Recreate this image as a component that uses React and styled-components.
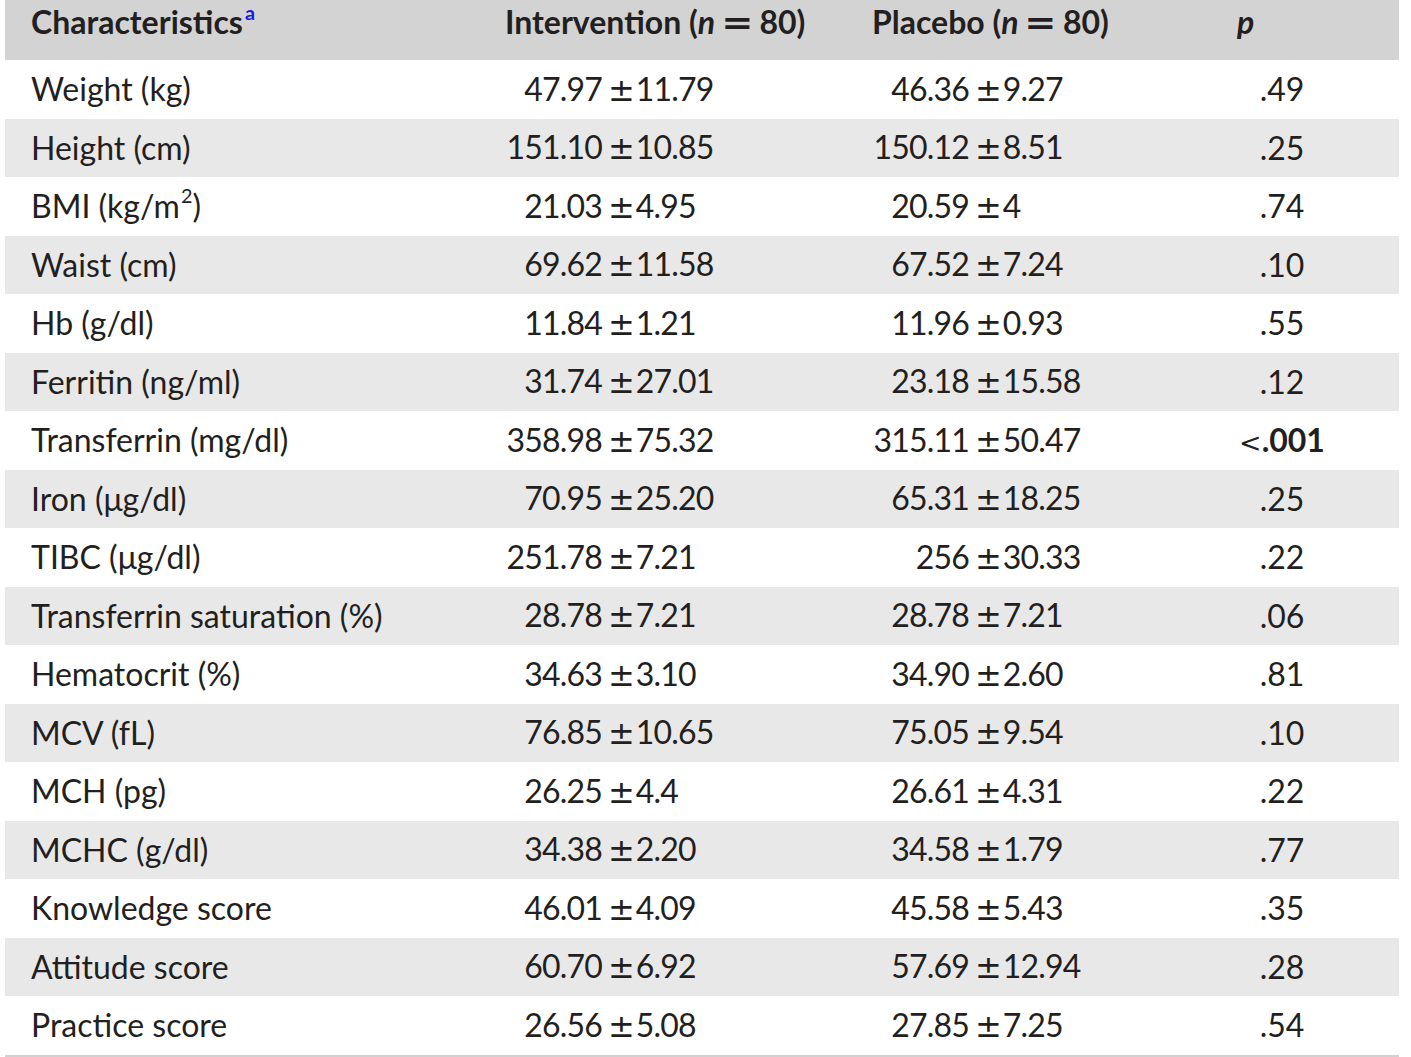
import styled, { createGlobalStyle } from "styled-components";

const GlobalStyle = createGlobalStyle`
  html, body {
    margin: 0;
    padding: 0;
    background: #ffffff;
  }
  body {
    font-family: Lato, "Open Sans", sans-serif;
    color: #231f20;
  }
`;

const SupText = styled.sup`
  font-size: 0.62em;
  line-height: 0;
  vertical-align: 0.75em;
  margin-left: 1px;
`;

const rows = [
  { label: "Weight (kg)", a: ["47.97", "11.79"], b: ["46.36", "9.27"], p: ".49" },
  { label: "Height (cm)", a: ["151.10", "10.85"], b: ["150.12", "8.51"], p: ".25" },
  { label: <>BMI (kg/m<SupText>2</SupText>)</>, a: ["21.03", "4.95"], b: ["20.59", "4"], p: ".74" },
  { label: "Waist (cm)", a: ["69.62", "11.58"], b: ["67.52", "7.24"], p: ".10" },
  { label: "Hb (g/dl)", a: ["11.84", "1.21"], b: ["11.96", "0.93"], p: ".55" },
  { label: "Ferritin (ng/ml)", a: ["31.74", "27.01"], b: ["23.18", "15.58"], p: ".12" },
  { label: "Transferrin (mg/dl)", a: ["358.98", "75.32"], b: ["315.11", "50.47"], p: "<.001", strong: true },
  { label: "Iron (μg/dl)", a: ["70.95", "25.20"], b: ["65.31", "18.25"], p: ".25" },
  { label: "TIBC (μg/dl)", a: ["251.78", "7.21"], b: ["256", "30.33"], p: ".22" },
  { label: "Transferrin saturation (%)", a: ["28.78", "7.21"], b: ["28.78", "7.21"], p: ".06" },
  { label: "Hematocrit (%)", a: ["34.63", "3.10"], b: ["34.90", "2.60"], p: ".81" },
  { label: "MCV (fL)", a: ["76.85", "10.65"], b: ["75.05", "9.54"], p: ".10" },
  { label: "MCH (pg)", a: ["26.25", "4.4"], b: ["26.61", "4.31"], p: ".22" },
  { label: "MCHC (g/dl)", a: ["34.38", "2.20"], b: ["34.58", "1.79"], p: ".77" },
  { label: "Knowledge score", a: ["46.01", "4.09"], b: ["45.58", "5.43"], p: ".35" },
  { label: "Attitude score", a: ["60.70", "6.92"], b: ["57.69", "12.94"], p: ".28" },
  { label: "Practice score", a: ["26.56", "5.08"], b: ["27.85", "7.25"], p: ".54" },
];

const Page = styled.div`
  padding: 0 12px 0 5px;
`;

const Table = styled.div`
  display: flex;
  flex-direction: column;
  border-bottom: 4px solid #d1d1d1;
  font-size: 32px;
`;

const Row = styled.div`
  display: grid;
  grid-template-columns: 475px 370px 365px 1fr;
  align-items: center;
  height: 58.5px;
  background: ${(p) => (p.$shade ? "#e8e8e8" : "#ffffff")};
`;

const HeadRow = styled(Row)`
  height: 60px;
  align-items: start;
  padding-top: 3px;
  box-sizing: border-box;
  background: #d3d3d3;
  font-weight: 700;
`;

const Cell = styled.div`
  padding-left: ${(p) => p.$pad || 22}px;
  white-space: nowrap;
  line-height: 1.2;
`;

const FootRef = styled.sup`
  font-size: 0.62em;
  font-weight: 700;
  line-height: 0;
  vertical-align: 0.7em;
  color: #1a1ae0;
  margin-left: 2px;
`;

/* math glyphs come from a wider font in the source */
const MathSym = styled.span`
  font-family: "DejaVu Sans", sans-serif;
  font-weight: ${(p) => (p.$bold ? 700 : 400)};
  letter-spacing: 0;
`;

const WideEq = styled(MathSym)`
  display: inline-block;
  margin: 0 1px;
  transform: scaleX(1.2);
`;

const Stat = styled.div`
  display: flex;
  align-items: baseline;
  padding-left: ${(p) => p.$pad}px;
  white-space: nowrap;
  line-height: 1.2;
  letter-spacing: -0.8px;
`;

const Mean = styled.span`
  width: ${(p) => p.$w}px;
  text-align: right;
`;

const PlusMinus = styled(MathSym)`
  margin-left: 6px;
  margin-right: 1px;
`;

const PValue = styled.div`
  width: 90px;
  margin-left: 22px;
  text-align: center;
  line-height: 1.2;
`;

const Less = styled(MathSym)`
  font-size: 0.84em;
`;

const Bold = styled.b`
  font-weight: 700;
`;

function Value({ pair, pad }) {
  return (
    <Stat $pad={pad}>
      <Mean $w={97}>{pair[0]}</Mean>
      <PlusMinus>±</PlusMinus>
      <span>{pair[1]}</span>
    </Stat>
  );
}

function GroupHead({ name }) {
  return (
    <>
      {name} (<i>n</i> <WideEq $bold>=</WideEq> 80)
    </>
  );
}

export default function App() {
  return (
    <Page>
      <GlobalStyle />
      <Table>
        <HeadRow>
          <Cell $pad={26}>
            Characteristics<FootRef>a</FootRef>
          </Cell>
          <Cell $pad={25}>
            <GroupHead name="Intervention" />
          </Cell>
          <Cell $pad={22}>
            <GroupHead name="Placebo" />
          </Cell>
          <Cell $pad={22}>
            <i>p</i>
          </Cell>
        </HeadRow>
        {rows.map((r, i) => (
          <Row key={i} $shade={i % 2 === 1}>
            <Cell $pad={26}>{r.label}</Cell>
            <Value pair={r.a} pad={25} />
            <Value pair={r.b} pad={22} />
            <PValue>
              {r.strong ? (
                <>
                  <Less>&lt;</Less>
                  <Bold>.001</Bold>
                </>
              ) : (
                r.p
              )}
            </PValue>
          </Row>
        ))}
      </Table>
    </Page>
  );
}
